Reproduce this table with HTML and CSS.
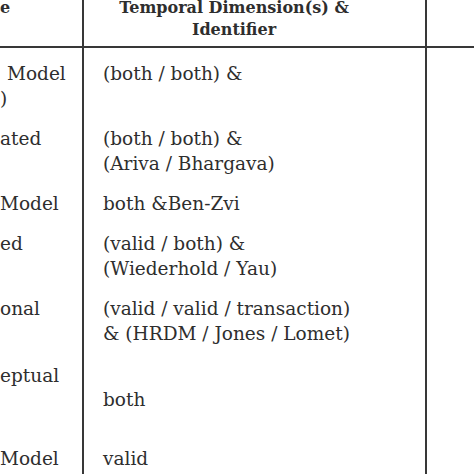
FILE: index.html
```html
<!DOCTYPE html>
<html>
<head>
<meta charset="utf-8">
<link rel="stylesheet" href="styles.css">
</head>
<body>
<div class="table">
  <div class="row head">
    <div class="cell c1"><div class="hl">e</div></div>
    <div class="cell c2"><div class="hl">Temporal Dimension(s) &amp;</div><div class="hl">Identifier</div></div>
    <div class="cell c3"></div>
  </div>
  <div class="row r1">
    <div class="cell c1"><div class="ln ind">Model</div><div class="ln">)</div></div>
    <div class="cell c2"><div class="ln">(both / both) &amp;</div></div>
    <div class="cell c3"></div>
  </div>
  <div class="row r2">
    <div class="cell c1"><div class="ln">ated</div></div>
    <div class="cell c2"><div class="ln">(both / both) &amp;</div><div class="ln">(Ariva / Bhargava)</div></div>
    <div class="cell c3"></div>
  </div>
  <div class="row r3">
    <div class="cell c1"><div class="ln">Model</div></div>
    <div class="cell c2"><div class="ln">both &amp;Ben-Zvi</div></div>
    <div class="cell c3"></div>
  </div>
  <div class="row r4">
    <div class="cell c1"><div class="ln">ed</div></div>
    <div class="cell c2"><div class="ln">(valid / both) &amp;</div><div class="ln">(Wiederhold / Yau)</div></div>
    <div class="cell c3"></div>
  </div>
  <div class="row r5">
    <div class="cell c1"><div class="ln">onal</div></div>
    <div class="cell c2"><div class="ln">(valid / valid / transaction)</div><div class="ln">&amp; (HRDM / Jones / Lomet)</div></div>
    <div class="cell c3"></div>
  </div>
  <div class="row r6">
    <div class="cell c1"><div class="ln">eptual</div></div>
    <div class="cell c2"><div class="ln low">both</div></div>
    <div class="cell c3"></div>
  </div>
  <div class="row r7">
    <div class="cell c1"><div class="ln">Model</div></div>
    <div class="cell c2"><div class="ln">valid</div></div>
    <div class="cell c3"></div>
  </div>
</div>
</body>
</html>
```

FILE: styles.css
```css
html, body {
  margin: 0;
  padding: 0;
  background: #ffffff;
  overflow: hidden;
}
body {
  width: 474px;
  height: 474px;
  font-family: "DejaVu Serif", "Liberation Serif", serif;
  color: #2e2e2e;
}
.table {
  display: flex;
  flex-direction: column;
  margin-top: -3px;
}
.row {
  display: grid;
  grid-template-columns: 84px 343px 47px;
}
.cell.c1 {
  border-right: 2px solid #383838;
}
.cell.c2 {
  border-right: 2px solid #383838;
  padding-left: 19px;
}
.head {
  height: 49px;
  border-bottom: 2px solid #383838;
}
.head .hl {
  font-weight: bold;
  font-size: 16px;
  line-height: 22px;
}
.head .c2 {
  padding-left: 0;
  padding-right: 41px;
  text-align: center;
}
.ln {
  font-size: 18.5px;
  line-height: 25px;
  white-space: nowrap;
}
.ind {
  padding-left: 7px;
}
.row.r1 { height: 78px; }
.r1 .cell { padding-top: 13px; }
.row.r2 { height: 65px; }
.row.r3 { height: 40px; }
.row.r4 { height: 65px; }
.row.r5 { height: 67px; }
.row.r6 { height: 83px; }
.low { margin-top: 24px; }
.row.r7 { height: 40px; }
```
